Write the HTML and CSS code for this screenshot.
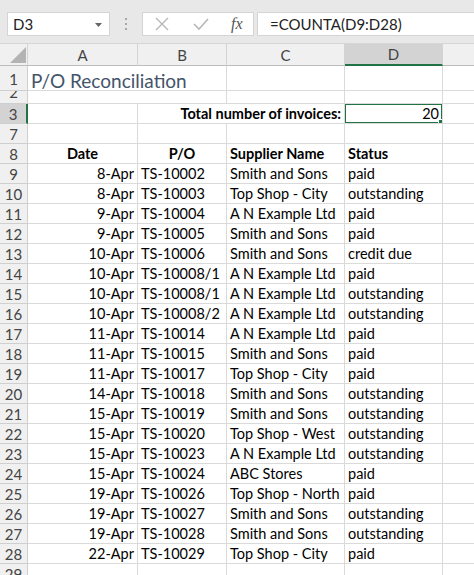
FILE: index.html
```html
<!DOCTYPE html>
<html>
<head>
<meta charset="utf-8">
<link rel="stylesheet" href="styles.css">
</head>
<body>
<div class="toolbar">
  <div class="namebox"><span>D3</span><svg class="caret" width="7" height="4" viewBox="0 0 7 4"><polygon points="0,0 7,0 3.5,4" fill="#666"/></svg></div>
  <div class="dots"><i></i><i></i><i></i></div>
  <div class="fxbox">
    <svg class="ico" width="14" height="14" viewBox="0 0 14 14"><path d="M1 1 L13 13 M13 1 L1 13" stroke="#b8b8b8" stroke-width="1.4" fill="none"/></svg>
    <svg class="ico" width="16" height="14" viewBox="0 0 16 14"><path d="M1 7 L6 12 L15 2" stroke="#b8b8b8" stroke-width="1.6" fill="none"/></svg>
    <span class="fx">fx</span>
  </div>
  <div class="formula">=COUNTA(D9:D28)</div>
</div>
<table class="sheet">
  <colgroup>
    <col class="c-rh"><col class="c-a"><col class="c-b"><col class="c-c"><col class="c-d"><col class="c-e">
  </colgroup>
  <tr class="colhead">
    <th class="corner"><svg width="16" height="16" viewBox="0 0 16 16"><polygon points="16,0 16,16 0,16" fill="#b4b4b4"/></svg></th>
    <th>A</th><th>B</th><th>C</th><th class="colsel">D</th><th></th>
  </tr>
  <tr class="r-title">
    <th class="rh">1</th><td colspan="2" class="title">P/O Reconciliation</td><td></td><td></td><td></td>
  </tr>
  <tr class="r-tiny">
    <th class="rh"><div class="clip"><span>2</span></div></th><td colspan="2"></td><td></td><td></td><td></td>
  </tr>
  <tr>
    <th class="rh rowsel">3</th><td></td><td colspan="2" class="b r">Total number of invoices:</td><td class="r active">20<div class="selbox"><i class="handle"></i></div></td><td></td>
  </tr>
  <tr>
    <th class="rh">7</th><td></td><td></td><td></td><td></td><td></td>
  </tr>
  <tr>
    <th class="rh">8</th><td class="b ctr">Date</td><td class="b ctr">P/O</td><td class="b">Supplier Name</td><td class="b">Status</td><td></td>
  </tr>
  <tr><th class="rh">9</th><td class="r">8-Apr</td><td>TS-10002</td><td>Smith and Sons</td><td>paid</td><td></td></tr>
  <tr><th class="rh">10</th><td class="r">8-Apr</td><td>TS-10003</td><td>Top Shop - City</td><td>outstanding</td><td></td></tr>
  <tr><th class="rh">11</th><td class="r">9-Apr</td><td>TS-10004</td><td>A N Example Ltd</td><td>paid</td><td></td></tr>
  <tr><th class="rh">12</th><td class="r">9-Apr</td><td>TS-10005</td><td>Smith and Sons</td><td>paid</td><td></td></tr>
  <tr><th class="rh">13</th><td class="r">10-Apr</td><td>TS-10006</td><td>Smith and Sons</td><td>credit due</td><td></td></tr>
  <tr><th class="rh">14</th><td class="r">10-Apr</td><td>TS-10008/1</td><td>A N Example Ltd</td><td>paid</td><td></td></tr>
  <tr><th class="rh">15</th><td class="r">10-Apr</td><td>TS-10008/1</td><td>A N Example Ltd</td><td>outstanding</td><td></td></tr>
  <tr><th class="rh">16</th><td class="r">10-Apr</td><td>TS-10008/2</td><td>A N Example Ltd</td><td>outstanding</td><td></td></tr>
  <tr><th class="rh">17</th><td class="r">11-Apr</td><td>TS-10014</td><td>A N Example Ltd</td><td>paid</td><td></td></tr>
  <tr><th class="rh">18</th><td class="r">11-Apr</td><td>TS-10015</td><td>Smith and Sons</td><td>paid</td><td></td></tr>
  <tr><th class="rh">19</th><td class="r">11-Apr</td><td>TS-10017</td><td>Top Shop - City</td><td>paid</td><td></td></tr>
  <tr><th class="rh">20</th><td class="r">14-Apr</td><td>TS-10018</td><td>Smith and Sons</td><td>outstanding</td><td></td></tr>
  <tr><th class="rh">21</th><td class="r">15-Apr</td><td>TS-10019</td><td>Smith and Sons</td><td>outstanding</td><td></td></tr>
  <tr><th class="rh">22</th><td class="r">15-Apr</td><td>TS-10020</td><td>Top Shop - West</td><td>outstanding</td><td></td></tr>
  <tr><th class="rh">23</th><td class="r">15-Apr</td><td>TS-10023</td><td>A N Example Ltd</td><td>outstanding</td><td></td></tr>
  <tr><th class="rh">24</th><td class="r">15-Apr</td><td>TS-10024</td><td>ABC Stores</td><td>paid</td><td></td></tr>
  <tr><th class="rh">25</th><td class="r">19-Apr</td><td>TS-10026</td><td>Top Shop - North</td><td>paid</td><td></td></tr>
  <tr><th class="rh">26</th><td class="r">19-Apr</td><td>TS-10027</td><td>Smith and Sons</td><td>outstanding</td><td></td></tr>
  <tr><th class="rh">27</th><td class="r">19-Apr</td><td>TS-10028</td><td>Smith and Sons</td><td>outstanding</td><td></td></tr>
  <tr><th class="rh">28</th><td class="r">22-Apr</td><td>TS-10029</td><td>Top Shop - City</td><td>paid</td><td></td></tr>
  <tr><th class="rh">29</th><td></td><td></td><td></td><td></td><td></td></tr>
</table>
</body>
</html>
```
FILE: styles.css
```css
html, body {
  margin: 0;
  padding: 0;
  background: #ffffff;
  overflow: hidden;
}
body {
  width: 474px;
  height: 575px;
  font-family: Lato, "Open Sans", sans-serif;
  color: #000;
}
.toolbar {
  height: 44px;
  box-sizing: border-box;
  background: #e8e8e8;
  display: flex;
  align-items: flex-start;
  padding: 12px 0 0 7px;
  border-bottom: 1px solid #d6d6d6;
}
.namebox {
  width: 103px;
  height: 24px;
  box-sizing: border-box;
  background: #fff;
  border: 1px solid #d4d4d4;
  display: flex;
  align-items: center;
  justify-content: space-between;
  padding: 0 7px 0 5px;
  font-size: 15px;
  color: #222;
}
.caret { margin-top: 1px; }
.dots {
  width: 32px;
  height: 24px;
  display: flex;
  flex-direction: column;
  align-items: center;
  justify-content: center;
  gap: 3px;
}
.dots i {
  display: block;
  width: 2px;
  height: 2px;
  background: #a8a8a8;
}
.fxbox {
  width: 112px;
  height: 24px;
  box-sizing: border-box;
  background: #fff;
  border: 1px solid #d4d4d4;
  display: flex;
  align-items: center;
  padding: 0 0 0 12px;
  gap: 0;
}
.fxbox .ico:first-child { margin-right: 24px; }
.fxbox .ico:nth-child(2) { margin-right: 22px; }
.fx {
  font-family: "Liberation Serif", serif;
  font-style: italic;
  font-size: 16px;
  color: #555;
}
.formula {
  flex: 1;
  height: 24px;
  box-sizing: border-box;
  margin-left: 3px;
  background: #fff;
  border: 1px solid #d4d4d4;
  border-right: none;
  padding: 0 0 0 12px;
  font-size: 15px;
  line-height: 22px;
  color: #222;
}
.sheet {
  table-layout: fixed;
  width: 484px;
  border-collapse: separate;
  border-spacing: 0;
  font-size: 14.5px;
}
.c-rh { width: 28px; }
.c-a { width: 110px; }
.c-b { width: 89px; }
.c-c { width: 118px; }
.c-d { width: 98px; }
.c-e { width: 41px; }
.sheet tr { height: 20px; }
.sheet td {
  padding: 0 3px;
  border-right: 1px solid #dadada;
  border-bottom: 1px solid #dadada;
  line-height: 18px;
  white-space: nowrap;
  overflow: hidden;
  vertical-align: bottom;
}
.sheet th {
  padding: 0;
  font-weight: normal;
  font-size: 15px;
  color: #444;
  background: #f0f0f0;
  border-right: 1px solid #cfcfcf;
  border-bottom: 1px solid #cfcfcf;
  line-height: 18px;
}
.sheet tr.colhead { height: 22px; }
.colhead th {
  background: #f0f0f0;
  border-bottom: 1px solid #bdbdbd;
  border-right: 1px solid #d4d4d4;
  vertical-align: middle;
}
.colhead th.corner {
  text-align: right;
  vertical-align: bottom;
  line-height: 0;
  padding: 0 1px 2px 0;
}
.colhead th.colsel {
  background: #d3d3d3;
  border-bottom: 2px solid #217346;
}
.rh { text-align: center; }
.rh.rowsel {
  background: #d3d3d3;
  border-right: 2px solid #217346;
}
.sheet tr.r-title { height: 25px; }
.r-title th { vertical-align: bottom; line-height: 22px; }
.title {
  font-weight: normal;
  font-size: 19px;
  color: #44546a;
  line-height: 22px;
  padding-left: 4px;
  overflow: visible;
}
.sheet tr.r-tiny { height: 13px; }
.sheet .r-tiny td, .sheet .r-tiny th { line-height: 12px; height: 12px; }
.clip {
  height: 12px;
  overflow: hidden;
}
.clip span {
  display: block;
  margin-top: -9px;
  line-height: 20px;
}
.b { font-weight: bold; }
.r { text-align: right; }
.ctr { text-align: center; }
.active { position: relative; padding-right: 5px; }
.selbox {
  position: absolute;
  left: -1px;
  top: -1px;
  right: -1px;
  bottom: -1px;
  border: 2px solid #217346;
  pointer-events: none;
}
.handle {
  position: absolute;
  right: -4px;
  bottom: -4px;
  width: 5px;
  height: 5px;
  background: #217346;
  border: 1px solid #fff;
}
```
